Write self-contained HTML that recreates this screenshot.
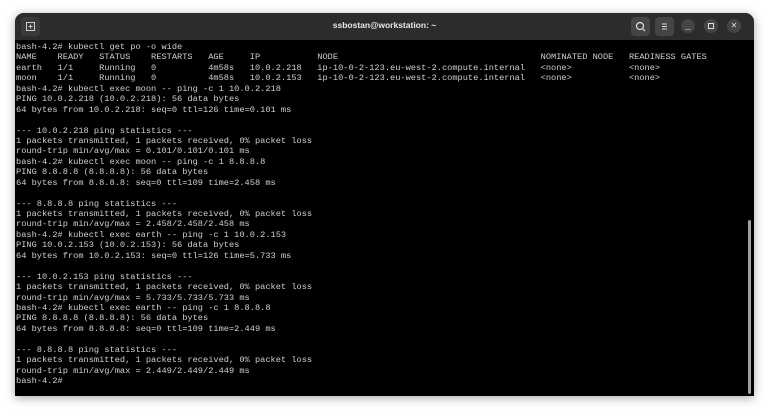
<!DOCTYPE html>
<html><head><meta charset="utf-8"><style>
html,body{margin:0;padding:0;width:768px;height:413px;background:#fff;overflow:hidden}
.win{position:absolute;left:15px;top:13px;width:739px;height:383px;background:#000;border-radius:9px 9px 0 0;box-shadow:0 2px 10px rgba(0,0,0,.35);overflow:hidden}
.tb{position:absolute;left:0;top:0;width:739px;height:27px;background:#2c2c2c}
.title{position:absolute;left:0;width:739px;top:7px;text-align:center;color:#e8e8e8;font:bold 8.5px "Liberation Sans",sans-serif}
.btn{position:absolute;top:4px;width:19px;height:19px;border-radius:4px;background:#454545}
.cb{position:absolute;top:6px;width:14px;height:14px;border-radius:50%;background:#454545;color:#ddd;font:8px "Liberation Sans",sans-serif;text-align:center;line-height:14px}
pre{position:absolute;left:1px;top:29px;margin:0;color:#d0d0d0;font:8.67px/10.44px "Liberation Mono",monospace;white-space:pre}
.sb{position:absolute;left:733px;top:207px;width:3px;height:174px;background:#a0a0a0;border-radius:2px}
</style></head><body>
<div class="win">
<div class="tb">
<div class="btn" style="left:6px;background:#3a3a3a"><svg width="19" height="19"><rect x="5.5" y="5.5" width="8" height="8" fill="none" stroke="#ccc"/><path d="M9.5 7.5v4M7.5 9.5h4" stroke="#ccc"/></svg></div>
<div class="title">ssbostan@workstation: ~</div>
<div class="btn" style="left:616px"><svg width="19" height="19"><circle cx="9" cy="9" r="3.5" fill="none" stroke="#ddd" stroke-width="1.2"/><path d="M11.5 11.5l2.5 2.5" stroke="#ddd" stroke-width="1.2"/></svg></div>
<div class="btn" style="left:640px"><svg width="19" height="19"><path d="M7 7h5M7 9.5h5M7 12h5" stroke="#ddd"/></svg></div>
<div class="cb" style="left:666px">_</div>
<div class="cb" style="left:689px"><svg width="14" height="14"><rect x="4.5" y="4.5" width="5" height="5" fill="none" stroke="#ddd"/></svg></div>
<div class="cb" style="left:712px">✕</div>
</div>
<pre>bash-4.2# kubectl get po -o wide
NAME    READY   STATUS    RESTARTS   AGE     IP           NODE                                       NOMINATED NODE   READINESS GATES
earth   1/1     Running   0          4m58s   10.0.2.218   ip-10-0-2-123.eu-west-2.compute.internal   &lt;none&gt;           &lt;none&gt;
moon    1/1     Running   0          4m58s   10.0.2.153   ip-10-0-2-123.eu-west-2.compute.internal   &lt;none&gt;           &lt;none&gt;
bash-4.2# kubectl exec moon -- ping -c 1 10.0.2.218
PING 10.0.2.218 (10.0.2.218): 56 data bytes
64 bytes from 10.0.2.218: seq=0 ttl=126 time=0.101 ms

--- 10.0.2.218 ping statistics ---
1 packets transmitted, 1 packets received, 0% packet loss
round-trip min/avg/max = 0.101/0.101/0.101 ms
bash-4.2# kubectl exec moon -- ping -c 1 8.8.8.8
PING 8.8.8.8 (8.8.8.8): 56 data bytes
64 bytes from 8.8.8.8: seq=0 ttl=109 time=2.458 ms

--- 8.8.8.8 ping statistics ---
1 packets transmitted, 1 packets received, 0% packet loss
round-trip min/avg/max = 2.458/2.458/2.458 ms
bash-4.2# kubectl exec earth -- ping -c 1 10.0.2.153
PING 10.0.2.153 (10.0.2.153): 56 data bytes
64 bytes from 10.0.2.153: seq=0 ttl=126 time=5.733 ms

--- 10.0.2.153 ping statistics ---
1 packets transmitted, 1 packets received, 0% packet loss
round-trip min/avg/max = 5.733/5.733/5.733 ms
bash-4.2# kubectl exec earth -- ping -c 1 8.8.8.8
PING 8.8.8.8 (8.8.8.8): 56 data bytes
64 bytes from 8.8.8.8: seq=0 ttl=109 time=2.449 ms

--- 8.8.8.8 ping statistics ---
1 packets transmitted, 1 packets received, 0% packet loss
round-trip min/avg/max = 2.449/2.449/2.449 ms
bash-4.2#</pre>
<div class="sb"></div>
</div>
</body></html>
